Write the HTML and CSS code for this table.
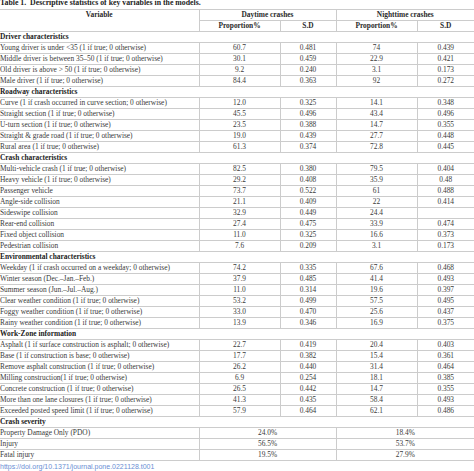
FILE: index.html
```html
<!DOCTYPE html>
<html>
<head>
<meta charset="utf-8">
<link rel="stylesheet" href="styles.css">
</head>
<body>
<p class="caption">Table 1.&nbsp; Descriptive statistics of key variables in the models.</p>
<table class="stats">
<colgroup><col class="c-var"><col class="c-p"><col class="c-sd"><col class="c-p"><col class="c-sd"></colgroup>
<thead>
<tr><th rowspan="2" class="var-head">Variable</th><th colspan="2" class="vl">Daytime crashes</th><th colspan="2" class="vl">Nighttime crashes</th></tr>
<tr><th class="vl">Proportion%</th><th class="vl">S.D</th><th class="vl">Proportion%</th><th class="vl">S.D</th></tr>
</thead>
<tbody>
<tr class="sec"><td colspan="5">Driver characteristics</td></tr>
<tr><td>Young driver is under &lt;35 (1 if true; 0 otherwise)</td><td>60.7</td><td>0.481</td><td>74</td><td>0.439</td></tr>
<tr><td>Middle driver is between 35–50 (1 if true; 0 otherwise)</td><td>30.1</td><td>0.459</td><td>22.9</td><td>0.421</td></tr>
<tr><td>Old driver is above &gt; 50 (1 if true; 0 otherwise)</td><td>9.2</td><td>0.240</td><td>3.1</td><td>0.173</td></tr>
<tr><td>Male driver (1 if true; 0 otherwise)</td><td>84.4</td><td>0.363</td><td>92</td><td>0.272</td></tr>
<tr class="sec"><td colspan="5">Roadway characteristics</td></tr>
<tr><td>Curve (1 if crash occurred in curve section; 0 otherwise)</td><td>12.0</td><td>0.325</td><td>14.1</td><td>0.348</td></tr>
<tr><td>Straight section (1 if true; 0 otherwise)</td><td>45.5</td><td>0.496</td><td>43.4</td><td>0.496</td></tr>
<tr><td>U-turn section (1 if true; 0 otherwise)</td><td>23.5</td><td>0.388</td><td>14.7</td><td>0.355</td></tr>
<tr><td>Straight &amp; grade road (1 if true; 0 otherwise)</td><td>19.0</td><td>0.439</td><td>27.7</td><td>0.448</td></tr>
<tr><td>Rural area (1 if true; 0 otherwise)</td><td>61.3</td><td>0.374</td><td>72.8</td><td>0.445</td></tr>
<tr class="sec"><td colspan="5">Crash characteristics</td></tr>
<tr><td>Multi-vehicle crash (1 if true; 0 otherwise)</td><td>82.5</td><td>0.380</td><td>79.5</td><td>0.404</td></tr>
<tr><td>Heavy vehicle (1 if true; 0 otherwise)</td><td>29.2</td><td>0.408</td><td>35.9</td><td>0.48</td></tr>
<tr><td>Passenger vehicle</td><td>73.7</td><td>0.522</td><td>61</td><td>0.488</td></tr>
<tr><td>Angle-side collision</td><td>21.1</td><td>0.409</td><td>22</td><td>0.414</td></tr>
<tr><td>Sideswipe collision</td><td>32.9</td><td>0.449</td><td>24.4</td><td></td></tr>
<tr><td>Rear-end collision</td><td>27.4</td><td>0.475</td><td>33.9</td><td>0.474</td></tr>
<tr><td>Fixed object collision</td><td>11.0</td><td>0.325</td><td>16.6</td><td>0.373</td></tr>
<tr><td>Pedestrian collision</td><td>7.6</td><td>0.209</td><td>3.1</td><td>0.173</td></tr>
<tr class="sec"><td colspan="5">Environmental characteristics</td></tr>
<tr><td>Weekday (1 if crash occurred on a weekday; 0 otherwise)</td><td>74.2</td><td>0.335</td><td>67.6</td><td>0.468</td></tr>
<tr><td>Winter season (Dec.–Jan.–Feb.)</td><td>37.9</td><td>0.485</td><td>41.4</td><td>0.493</td></tr>
<tr><td>Summer season (Jun.–Jul.–Aug.)</td><td>11.0</td><td>0.314</td><td>19.6</td><td>0.397</td></tr>
<tr><td>Clear weather condition (1 if true; 0 otherwise)</td><td>53.2</td><td>0.499</td><td>57.5</td><td>0.495</td></tr>
<tr><td>Foggy weather condition (1 if true; 0 otherwise)</td><td>33.0</td><td>0.470</td><td>25.6</td><td>0.437</td></tr>
<tr><td>Rainy weather condition (1 if true; 0 otherwise)</td><td>13.9</td><td>0.346</td><td>16.9</td><td>0.375</td></tr>
<tr class="sec"><td colspan="5">Work-Zone information</td></tr>
<tr><td>Asphalt (1 if surface construction is asphalt; 0 otherwise)</td><td>22.7</td><td>0.419</td><td>20.4</td><td>0.403</td></tr>
<tr><td>Base (1 if construction is base; 0 otherwise)</td><td>17.7</td><td>0.382</td><td>15.4</td><td>0.361</td></tr>
<tr><td>Remove asphalt construction (1 if true; 0 otherwise)</td><td>26.2</td><td>0.440</td><td>31.4</td><td>0.464</td></tr>
<tr><td>Milling construction(1 if true; 0 otherwise)</td><td>6.9</td><td>0.254</td><td>18.1</td><td>0.385</td></tr>
<tr><td>Concrete construction (1 if true; 0 otherwise)</td><td>26.5</td><td>0.442</td><td>14.7</td><td>0.355</td></tr>
<tr><td>More than one lane closures (1 if true; 0 otherwise)</td><td>41.3</td><td>0.435</td><td>58.4</td><td>0.493</td></tr>
<tr><td>Exceeded posted speed limit (1 if true; 0 otherwise)</td><td>57.9</td><td>0.464</td><td>62.1</td><td>0.486</td></tr>
<tr class="sec"><td colspan="5">Crash severity</td></tr>
<tr><td>Property Damage Only (PDO)</td><td colspan="2">24.0%</td><td colspan="2">18.4%</td></tr>
<tr><td>Injury</td><td colspan="2">56.5%</td><td colspan="2">53.7%</td></tr>
<tr><td>Fatal injury</td><td colspan="2">19.5%</td><td colspan="2">27.9%</td></tr>
</tbody>
</table>
<p class="doi"><a href="#">https://doi.org/10.1371/journal.pone.0221128.t001</a></p>
</body>
</html>
```

FILE: styles.css
```css
html, body {
  margin: 0;
  padding: 0;
  background: #ffffff;
}
body {
  width: 474px;
  overflow: hidden;
  font-family: "Liberation Serif", "Times New Roman", serif;
  color: #333333;
}
.caption {
  margin: 0;
  height: 9px;
  line-height: 6px;
  font-size: 7.8px;
  font-weight: bold;
  color: #222222;
  white-space: nowrap;
}
.stats {
  width: 474px;
  table-layout: fixed;
  border-collapse: collapse;
  font-size: 7.4px;
}
.c-var { width: 199px; }
.c-p { width: 81px; }
.c-sd { width: 56px; }
.stats col:last-child { width: 57px; }
.stats th,
.stats td {
  height: 10px;
  line-height: 10px;
  padding: 0;
  border-top: 1px solid #cccccc;
  border-bottom: 1px solid #cccccc;
  white-space: nowrap;
  overflow: hidden;
  text-align: center;
  vertical-align: middle;
  color: #3a3a3a;
}
.stats th {
  font-weight: bold;
  color: #2a2a2a;
}
.stats .var-head {
  vertical-align: top;
}
.stats td + td,
.stats .vl {
  border-left: 1px solid #cccccc;
}
.stats td:first-child {
  text-align: left;
}
.stats .sec td {
  font-weight: bold;
  color: #222222;
  border-left: none;
}
.doi {
  margin: 1px 0 0 0;
  line-height: 9px;
  font-family: "Liberation Sans", Arial, sans-serif;
  font-size: 7px;
  white-space: nowrap;
}
.doi a {
  color: #6a8ed4;
  text-decoration: none;
}
```
